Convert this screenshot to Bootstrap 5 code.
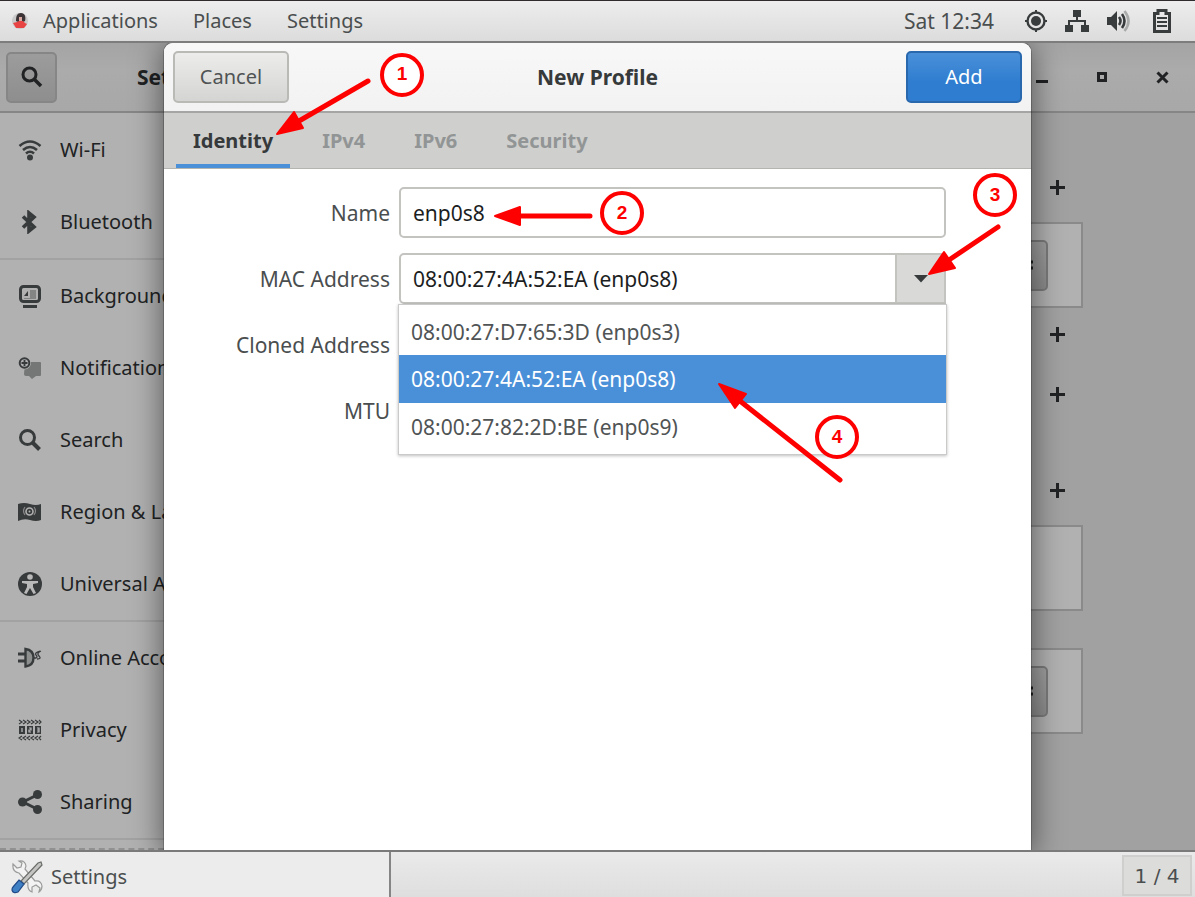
<!DOCTYPE html>
<html lang="en">
<head>
<meta charset="utf-8">
<meta name="viewport" content="width=device-width, initial-scale=1">
<title>New Profile</title>
<link rel="stylesheet" href="https://cdn.jsdelivr.net/npm/bootstrap@5.3.0/dist/css/bootstrap.min.css">
<style>
  body { font-family: "Noto Sans", "Open Sans", sans-serif; font-size: 20px; line-height: 28px; color: #4a4e4f; background: #a1a1a1; }
  button { font: inherit; color: inherit; }
  .plain-btn { background: none; border: 0; padding: 0; display: flex; align-items: center; justify-content: center; }

  .top-panel { height: 43px; border-top: 1px solid #2e2a2e; border-bottom: 2px solid #7d7d7d; background: linear-gradient(#ededed, #dcdcdc); padding: 0 23px 0 11px; }
  .top-panel a { color: inherit; text-decoration: none; }
  .menu-links { gap: 35px; margin-left: 14px; }
  .tray { gap: 16px; }
  .clock { margin-right: 30px; font-size: 21px; }

  .desktop { min-height: 0; overflow: hidden; }
  .win-header { height: 70px; background: linear-gradient(#a4a4a4, #ababab 40%, #a8a8a8); border-bottom: 2px solid #868686; padding: 0 3px 0 6px; color: #202223; }
  .search-btn { width: 51px; height: 51px; border: 2px solid #868686; border-radius: 5px; background: linear-gradient(#9c9c9c, #8e8e8e); }
  .win-title { margin-left: 80px; font-size: 21px; font-weight: 700; width: 27px; overflow: hidden; white-space: nowrap; }
  .win-controls button { width: 60px; height: 50px; }

  .side-list { width: 332px; padding-top: 1px; background: #b1b1b1; color: #202223; }
  .side-list .list-group-item { height: 72px; padding: 0 0 0 18px; gap: 18px; background: none; border: 0; color: inherit; white-space: nowrap; }
  .side-list svg { flex: none; color: #383b3c; }
  .side-rule { height: 2px; flex: none; background: #a2a2a2; }
  .side-dash { border-top: 2px dashed #919191; margin-top: 8px; }

  .net-pane { padding: 54px 112px 0 40px; background: #a1a1a1; color: #202223; }
  .net-head { height: 40px; padding-right: 18px; }
  .net-box { height: 86px; border: 2px solid #8a8a8a; background: #b1b1b1; padding-right: 33px; }
  .gear-btn { width: 51px; height: 51px; border: 2px solid #7b7b7b; border-radius: 5px; background: linear-gradient(#a0a0a0, #8c8c8c); }
  .gap-s { margin-top: 6px; } .gap-m { margin-top: 15px; } .gap-l { margin-top: 20px; } .gap-xl { margin-top: 37px; } .gap-xxl { margin-top: 56px; }

  .profile-dialog { width: 867px; background: #fff; border-radius: 9px 9px 0 0; box-shadow: 0 4px 30px 2px rgba(0,0,0,.5), 0 0 0 1px rgba(0,0,0,.2); }
  .dlg-header { height: 70px; padding: 0 9px; border-radius: 9px 9px 0 0; background: linear-gradient(#f8f8f8, #f2f2f2); border-bottom: 2px solid #a5a5a3; }
  .dlg-header h1 { font-size: 21px; line-height: 28px; font-weight: 700; color: #363a3b; }
  .dlg-btn { width: 116px; height: 52px; border-radius: 5px; padding: 0; font-size: 20px; }
  .btn-cancel, .btn-cancel:hover { border: 2px solid #b9b9b5; background: linear-gradient(#ececeb, #d4d4d2); color: #4f5354; }
  .btn-add, .btn-add:hover { border: 2px solid #2a68ad; background: linear-gradient(#4a90d9, #2f7dd0 60%, #2f7dd0); color: #fff; }
  .tab-strip { height: 56px; padding: 0 12px; gap: 15px; background: #cfcfcd; border-bottom: 1px solid #b4b4b1; }
  .tab-strip .nav-link { height: 55px; padding: 4px 17px 0; font-weight: 700; color: #929595; border-bottom: 4px solid transparent; border-radius: 0; }
  .tab-strip .nav-link.active { color: #363a3b; border-color: #4a90d9; }

  .profile-form { padding: 18px 85px 0 0; }
  .form-line { margin-bottom: 15px; }
  .form-line label { width: 226px; margin-right: 9px; text-align: right; flex: none; font-size: 21px; color: #4a4e4f; }
  .form-line .form-control { height: 51px; padding: 0 12px; font-size: 21px; color: #1c1e1f; border: 2px solid #c3c3c0; border-radius: 5px; box-shadow: none; }
  .form-line .input-group .form-control { border-radius: 5px 0 0 5px; }
  .arrow-btn { width: 50px; border: 2px solid #c3c3c0; border-left-width: 1px; border-radius: 0 5px 5px 0; background: #d9d9d7; }
  .mac-menu { top: 51px; left: -1px; right: -1px; background: #fff; border: 1px solid #cacac8; padding: 0 0 3px; box-shadow: 0 1px 3px rgba(0,0,0,.25); z-index: 5; display: block; }
  .mac-menu .dropdown-item { height: 48px; padding: 0 12px; font-size: 21px; color: #505455; }
  .mac-menu li:first-child .dropdown-item { height: 50px; padding-top: 3px; }
  .mac-menu .dropdown-item.active { background: #4a90d9; color: #fff; }

  .callouts { top: 0; left: 0; width: 867px; height: 460px; z-index: 6; pointer-events: none; }
  .callouts text { font: 700 19px "Liberation Sans", sans-serif; fill: #f00; text-anchor: middle; }

  .task-panel { height: 47px; border-top: 2px solid #7a7a7a; background: linear-gradient(#eaeaea, #dedede); padding-right: 3px; }
  .task-btn { width: 391px; height: 45px; background: #ececec; border-right: 2px solid #858585; padding: 4px 0 0 10px; gap: 7px; justify-content: start; }
  .page-box { width: 70px; height: 41px; margin-top: 3px; background: #dcdcdb; border: 2px solid #cfcfcd; font-family: "DejaVu Sans", sans-serif; }
</style>
</head>
<body>
<div class="d-flex flex-column vh-100">

  <header class="top-panel d-flex align-items-center flex-shrink-0">
    <svg width="18" height="18" viewBox="0 0 18 18" aria-hidden="true"><circle cx="9" cy="9" r="8" fill="#c9c9c9"/><path d="M5 9c0-5 1-8 5-8 4 0 5 4 4 8l-2 1H7z" fill="#3b3335"/><path d="M8 5h3v4H8z" fill="#d8a8a0"/><path d="M2 11l4-1 2-1h4l2 2 2 1-3 4H5z" fill="#e94444"/></svg>
    <nav class="menu-links d-flex">
      <a href="#">Applications</a><a href="#">Places</a><a href="#">Settings</a>
    </nav>
    <span class="clock ms-auto">Sat 12:34</span>
    <div class="tray d-flex align-items-center">
      <svg width="24" height="24" viewBox="0 0 24 24" fill="none" stroke="#393c3d" aria-hidden="true"><circle cx="12" cy="12" r="8.500" stroke-width="2.400"/><circle cx="12" cy="12" r="5" fill="#393c3d" stroke="none"/><path d="M12 1v3M12 20v3M1 12h3M20 12h3" stroke-width="2"/></svg>
      <svg width="26" height="24" viewBox="0 0 26 24" aria-hidden="true"><path d="M9 1h8v7H9zM1 16h8v7H1zM17 16h8v7h-8z" fill="#393c3d"/><path d="M13 8v4M5 17v-5h16v5" fill="none" stroke="#393c3d" stroke-width="2"/></svg>
      <svg width="26" height="24" viewBox="0 0 26 24" aria-hidden="true"><path d="M1 8h4l6-6v20l-6-6H1z" fill="#393c3d"/><g fill="none" stroke-width="2.600"><path d="M13 8q3 4 0 8" stroke="#393c3d"/><path d="M16 5q5 7 0 14" stroke="#393c3d"/><path d="M18.500 2q8 10 0 20" stroke="#a9aaaa"/></g></svg>
      <svg class="ms-1" width="20" height="26" viewBox="0 0 20 26" aria-hidden="true"><path d="M6 2.500h8v3h3.500v18h-15v-18H6z" fill="none" stroke="#393c3d" stroke-width="3"/><path d="M5 10h10M5 14h10M5 18h10" stroke="#393c3d" stroke-width="2"/></svg>
    </div>
  </header>

  <main class="desktop position-relative flex-grow-1">
    <div class="d-flex flex-column h-100">
      <div class="win-header d-flex align-items-center flex-shrink-0">
        <button class="plain-btn search-btn" type="button" aria-label="Search"><svg width="24" height="24" viewBox="0 0 24 24" fill="none" stroke="#202223" stroke-width="3"><circle cx="9.500" cy="9.500" r="6.500"/><path d="M14.500 14.500L21 21" stroke-width="3.600"/></svg></button>
        <span class="win-title">Settings</span>
        <div class="win-controls d-flex ms-auto">
          <button class="plain-btn" type="button" aria-label="Minimize"><svg width="12" height="12" viewBox="0 0 12 12"><path d="M0 9h12v3H0z" fill="#202223"/></svg></button>
          <button class="plain-btn" type="button" aria-label="Maximize"><svg width="10" height="10" viewBox="0 0 10 10"><path d="M1.500 1.500h7v7h-7z" fill="none" stroke="#202223" stroke-width="3"/></svg></button>
          <button class="plain-btn" type="button" aria-label="Close"><svg width="13" height="13" viewBox="0 0 13 13"><path d="M1.500 1.500l10 10M11.500 1.500l-10 10" stroke="#202223" stroke-width="3"/></svg></button>
        </div>
      </div>
      <div class="d-flex flex-grow-1">
        <div class="side-list list-group list-group-flush rounded-0 flex-shrink-0">
          <a href="#" class="list-group-item d-flex align-items-center"><svg width="24" height="24" viewBox="0 0 24 24" fill="none" stroke="currentColor" stroke-width="2.600"><path d="M1.500 8q10.500-9 21 0"/><path d="M5 12q7-6 14 0"/><path d="M8 15.500q4-3.500 8 0"/><circle cx="12" cy="19.500" r="3" fill="currentColor" stroke="none"/></svg>Wi-Fi</a>
          <a href="#" class="list-group-item d-flex align-items-center"><svg width="24" height="24" viewBox="0 0 24 24" fill="none" stroke="currentColor" stroke-width="3.600"><path d="M5 6.500l11 10.500-5 4V3l5 4L5 17.500"/></svg>Bluetooth</a>
          <div class="side-rule"></div>
          <a href="#" class="list-group-item d-flex align-items-center"><svg width="24" height="24" viewBox="0 0 24 24"><rect x="2.500" y="2.500" width="19" height="15" rx="3" fill="none" stroke="currentColor" stroke-width="3"/><path d="M5 21h14v3H5z" fill="currentColor"/><path d="M6 12l4-5v5z" fill="currentColor"/><path d="M12 6h6v9H6v-1h6z" fill="#838585"/></svg>Background</a>
          <a href="#" class="list-group-item d-flex align-items-center"><svg width="24" height="24" viewBox="0 0 24 24"><path d="M7 6h15q1 0 1 1v12q0 1-1 1h-4l-4 3-3-3H8q-2 0-2-2z" fill="#757777"/><circle cx="6.500" cy="7" r="6.500" fill="#b1b1b1"/><circle cx="6.500" cy="7" r="4.800" fill="none" stroke="currentColor" stroke-width="2"/><path d="M6.500 4v6M3.500 7h6" stroke="currentColor" stroke-width="1.800"/></svg>Notifications</a>
          <a href="#" class="list-group-item d-flex align-items-center"><svg width="24" height="24" viewBox="0 0 24 24" fill="none" stroke="currentColor" stroke-width="3"><circle cx="9.500" cy="9.500" r="7"/><path d="M14.500 14.500L21.500 21.500" stroke-width="4"/></svg>Search</a>
          <a href="#" class="list-group-item d-flex align-items-center"><svg width="24" height="24" viewBox="0 0 24 24"><path d="M0 4q6-2 12 0 6 2 11 0v16q-5 2-11 0-6-2-12 1z" fill="currentColor"/><circle cx="11.500" cy="11.500" r="3.500" fill="none" stroke="#b1b1b1" stroke-width="1.600"/><circle cx="11.500" cy="11.500" r="1" fill="#b1b1b1"/><path d="M7 7q-3 4 0 8M16 7q3 4 0 8" fill="none" stroke="#888" stroke-width="1.200"/></svg>Region &amp; Language</a>
          <a href="#" class="list-group-item d-flex align-items-center"><svg width="24" height="24" viewBox="0 0 24 24"><circle cx="12" cy="12" r="12" fill="currentColor"/><circle cx="12" cy="5" r="2.800" fill="#b9b9b9"/><path d="M4 9h16v2l-5 1v3l3 6-2.500 1-3.500-6-3.500 6L6 21l3-6v-3L4 11z" fill="#b9b9b9"/></svg>Universal Access</a>
          <div class="side-rule"></div>
          <a href="#" class="list-group-item d-flex align-items-center"><svg width="24" height="24" viewBox="0 0 24 24" fill="none" stroke="currentColor" stroke-width="2.400"><path d="M0 8h8M0 15h8" stroke-width="3"/><path d="M7.500 3v17.500q8-1 8-8.700T7.500 3z" fill="#8d8f8f"/><path d="M15 12h3q2-1 0-3t4-4M19 13q5 0 2-3t2-5" stroke-width="1.300"/></svg>Online Accounts</a>
          <a href="#" class="list-group-item d-flex align-items-center"><svg width="24" height="24" viewBox="0 0 24 24"><path d="M1 8h6v8H1zM9 8h6v8H9zM17 8h6v8h-6z" fill="currentColor"/><path d="M4 10v4M11 10h2v2h-2v2h2M19 10h2v4h-2M19 12h2" fill="none" stroke="#c0c0c0" stroke-width="1.200"/><path d="M1 2l3 2-3 2M5 2l3 2-3 2M9 2l3 2-3 2M13 2l3 2-3 2M17 2l3 2-3 2M21 2l2 2-2 2M4 18l-3 2 3 2M8 18l-3 2 3 2M12 18l-3 2 3 2M16 18l-3 2 3 2M20 18l-3 2 3 2M23 18l-2 2 2 2" fill="none" stroke="currentColor" stroke-width="1.200"/></svg>Privacy</a>
          <a href="#" class="list-group-item d-flex align-items-center"><svg width="24" height="24" viewBox="0 0 24 24"><path d="M19 5L5 12l14 7" fill="none" stroke="currentColor" stroke-width="3"/><g fill="currentColor"><circle cx="19.500" cy="4.500" r="4.500"/><circle cx="4.500" cy="12" r="4.500"/><circle cx="19.500" cy="19.500" r="4.500"/></g></svg>Sharing</a>
          <div class="side-rule"></div>
          <div class="side-dash"></div>
        </div>
        <section class="net-pane flex-grow-1">
          <div class="net-head d-flex align-items-center"><button class="plain-btn ms-auto" type="button" aria-label="Add wired connection"><svg width="15" height="15"><path d="M0 7.500h15M7.500 0v15" stroke="#202223" stroke-width="3"/></svg></button></div>
          <div class="net-box gap-m d-flex align-items-center justify-content-end"><button class="plain-btn gear-btn" type="button" aria-label="Options"><svg width="24" height="24" viewBox="0 0 24 24"><circle cx="12" cy="12" r="6" fill="none" stroke="#202223" stroke-width="4"/><path d="M2 9h20M2 15h20M9 2v4M15 2v4M9 18v4M15 18v4" stroke="#202223" stroke-width="3"/></svg></button></div>
          <div class="net-head gap-s d-flex align-items-center"><button class="plain-btn ms-auto" type="button" aria-label="Add bond"><svg width="15" height="15"><path d="M0 7.500h15M7.500 0v15" stroke="#202223" stroke-width="3"/></svg></button></div>
          <div class="net-head gap-l d-flex align-items-center"><button class="plain-btn ms-auto" type="button" aria-label="Add bridge"><svg width="15" height="15"><path d="M0 7.500h15M7.500 0v15" stroke="#202223" stroke-width="3"/></svg></button></div>
          <div class="net-head gap-xxl d-flex align-items-center"><button class="plain-btn ms-auto" type="button" aria-label="Add VPN"><svg width="15" height="15"><path d="M0 7.500h15M7.500 0v15" stroke="#202223" stroke-width="3"/></svg></button></div>
          <div class="net-box gap-m"></div>
          <div class="net-box gap-xl d-flex align-items-center justify-content-end"><button class="plain-btn gear-btn" type="button" aria-label="Proxy options"><svg width="24" height="24" viewBox="0 0 24 24"><circle cx="12" cy="12" r="6" fill="none" stroke="#202223" stroke-width="4"/><path d="M2 9h20M2 15h20M9 2v4M15 2v4M9 18v4M15 18v4" stroke="#202223" stroke-width="3"/></svg></button></div>
        </section>
      </div>
    </div>

    <div class="position-absolute top-0 start-0 w-100 h-100 d-flex justify-content-center">
      <div class="profile-dialog position-relative h-100" role="dialog" aria-labelledby="dlg-title">
        <div class="dlg-header d-flex align-items-center justify-content-between">
          <button type="button" class="btn dlg-btn btn-cancel">Cancel</button>
          <h1 class="m-0" id="dlg-title">New Profile</h1>
          <button type="button" class="btn dlg-btn btn-add">Add</button>
        </div>
        <nav class="tab-strip nav flex-nowrap">
          <a href="#" class="nav-link active d-flex align-items-center">Identity</a>
          <a href="#" class="nav-link d-flex align-items-center">IPv4</a>
          <a href="#" class="nav-link d-flex align-items-center">IPv6</a>
          <a href="#" class="nav-link d-flex align-items-center">Security</a>
        </nav>
        <form class="profile-form">
          <div class="form-line d-flex align-items-center">
            <label for="f-name">Name</label>
            <input id="f-name" class="form-control" type="text" value="enp0s8">
          </div>
          <div class="form-line d-flex align-items-center">
            <label for="f-mac">MAC Address</label>
            <div class="input-group position-relative flex-nowrap">
              <input id="f-mac" class="form-control" type="text" value="08:00:27:4A:52:EA (enp0s8)">
              <button class="plain-btn arrow-btn" type="button" aria-label="Show addresses"><svg width="14" height="8" viewBox="0 0 14 8"><path d="M0 0h14L7 7.500z" fill="#363a3b"/></svg></button>
              <ul class="mac-menu position-absolute m-0 list-unstyled">
                <li><button type="button" class="dropdown-item">08:00:27:D7:65:3D (enp0s3)</button></li>
                <li><button type="button" class="dropdown-item active">08:00:27:4A:52:EA (enp0s8)</button></li>
                <li><button type="button" class="dropdown-item">08:00:27:82:2D:BE (enp0s9)</button></li>
              </ul>
            </div>
          </div>
          <div class="form-line d-flex align-items-center">
            <label for="f-clone">Cloned Address</label>
            <input id="f-clone" class="form-control" type="text">
          </div>
          <div class="form-line d-flex align-items-center">
            <label for="f-mtu">MTU</label>
            <input id="f-mtu" class="form-control" type="text">
          </div>
        </form>

        <svg class="callouts position-absolute" viewBox="0 0 867 460">
          <g stroke="#f00" stroke-width="5" stroke-linecap="round">
            <path d="M204 38L135 78"/><path d="M426 173H352"/><path d="M834 184L785 217"/><path d="M676 437L576 358"/>
          </g>
          <g fill="#f00" stroke="#f00" stroke-width="2" stroke-linejoin="round">
            <path d="M113 91L130 69 139 85z"/><path d="M331 173L356 164V182z"/><path d="M765 231L780 209 791 225z"/><path d="M555 341L582 351 571 365z"/>
          </g>
          <g fill="#fff" stroke="#f00" stroke-width="4">
            <circle cx="238" cy="32" r="20"/><circle cx="458" cy="170" r="20"/><circle cx="831" cy="152" r="20"/><circle cx="673" cy="394" r="20"/>
          </g>
          <text x="238" y="37">1</text><text x="458" y="176">2</text><text x="831" y="158">3</text><text x="673" y="400">4</text>
        </svg>
      </div>
    </div>
  </main>

  <footer class="task-panel d-flex flex-shrink-0 justify-content-between">
    <button class="plain-btn task-btn" type="button">
      <svg width="34" height="34" viewBox="0 0 34 34" aria-hidden="true"><path d="M3 4l4 4 4-1 1-4-3-2q6-1 7 5l-1 3 10 12q6-1 7 5 0 4-3 6l1-4-4-3-4 2v5q-5-2-4-9L9 13Q2 12 3 4z" fill="#f3f3f3" stroke="#9a9c9a" stroke-width="1.200"/><path d="M31 2l1 3-18 19-3-3L28 3z" fill="#c4c5c3" stroke="#6a6c68" stroke-width="1.200"/><path d="M9 20l5 4-6 8q-5 2-6-2 0-2 1-3z" fill="#3f7fc4" stroke="#204a87" stroke-width="1.200"/></svg>
      Settings
    </button>
    <div class="page-box d-flex align-items-center justify-content-center">1 / 4</div>
  </footer>
</div>
<script src="https://cdn.jsdelivr.net/npm/bootstrap@5.3.0/dist/js/bootstrap.bundle.min.js"></script>
</body>
</html>
